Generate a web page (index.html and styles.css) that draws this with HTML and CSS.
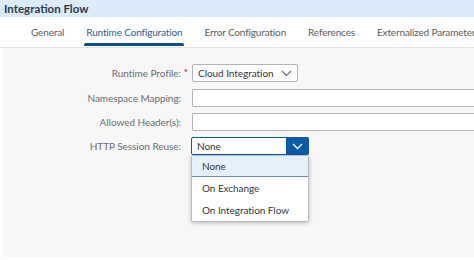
FILE: index.html
```html
<!DOCTYPE html>
<html>
<head>
<meta charset="utf-8">
<link rel="stylesheet" href="styles.css">
</head>
<body>
<div class="page">
  <header class="titlebar">Integration Flow</header>
  <nav class="tabs">
    <span class="tab">General</span>
    <span class="tab active">Runtime Configuration</span>
    <span class="tab">Error Configuration</span>
    <span class="tab">References</span>
    <span class="tab">Externalized Parameters</span>
  </nav>
  <main class="content">
    <div class="form">
      <div class="row first">
        <label class="label">Runtime Profile:<span class="req">*</span></label>
        <div class="select small">
          <span class="value">Cloud Integration</span>
          <svg class="chev" width="11" height="7" viewBox="0 0 11 7"><path d="M1 1l4.5 4.5L10 1" fill="none" stroke="#6a6d70" stroke-width="1.1"/></svg>
        </div>
      </div>
      <div class="row">
        <label class="label">Namespace Mapping:</label>
        <div class="input"></div>
      </div>
      <div class="row">
        <label class="label">Allowed Header(s):</label>
        <div class="input"></div>
      </div>
      <div class="row">
        <label class="label">HTTP Session Reuse:</label>
        <div class="combo-wrap">
          <div class="select open">
            <span class="value">None</span>
            <span class="btn"><svg width="11" height="7" viewBox="0 0 11 7"><path d="M1 1l4.5 4.5L10 1" fill="none" stroke="#fff" stroke-width="1.3"/></svg></span>
          </div>
          <ul class="menu">
            <li class="item sel">None</li>
            <li class="item">On Exchange</li>
            <li class="item">On Integration Flow</li>
          </ul>
        </div>
      </div>
    </div>
  </main>
</div>
</body>
</html>
```
FILE: styles.css
```css
* { box-sizing: border-box; }
html, body { margin: 0; padding: 0; background: #fff; }
body { font-family: Lato, "Liberation Sans", sans-serif; font-size: 10px; letter-spacing: -0.05px; color: #32363a; width: 474px; height: 260px; overflow: hidden; }
.page { display: flex; flex-direction: column; height: 257px; }
.titlebar { height: 17px; background: #dcebfa; font-weight: 700; font-size: 11.5px; line-height: 17px; padding-left: 4px; color: #2d3a47; letter-spacing: 0; }
.tabs { height: 31px; background: #fff; display: flex; gap: 22px; padding-left: 31px; border-bottom: 1px solid #e2e2e2; white-space: nowrap; overflow: hidden; letter-spacing: -0.15px; }
.tab { line-height: 31px; color: #595c5f; position: relative; flex-shrink: 0; }
.tab.active { color: #2c5c93; }
.tab.active::after { content: ""; position: absolute; left: -2px; right: -2px; bottom: 1px; height: 3px; background: #0b4f8e; border-radius: 2px 2px 0 0; }
.content { flex: 1; background: #f7f7f7; margin-left: 3px; padding-top: 16px; }
.form { display: flex; flex-direction: column; gap: 6px; }
.row { display: flex; align-items: flex-start; height: 18px; }
.row.first { margin-bottom: 1px; }
.label { width: 189px; text-align: right; color: #6a6d70; line-height: 18px; padding-right: 11px; position: relative; white-space: nowrap; }
.req { color: #bb0000; position: absolute; right: 4px; top: -1px; }
.select { display: flex; align-items: center; height: 18px; background: #fff; border: 1px solid #aeb3b7; border-radius: 2px; padding-left: 5px; white-space: nowrap; }
.select.small { width: 106px; justify-content: space-between; padding-right: 5px; }
.value { color: #32363a; }
.input { flex: 1; height: 18px; background: #fff; border: 1px solid #aeb3b7; border-right: none; border-radius: 2px 0 0 2px; }
.combo-wrap { position: relative; width: 118px; margin-left: -1px; }
.select.open { width: 118px; border-color: #0b5ba8; justify-content: space-between; padding-right: 0; }
.btn { width: 23px; height: 18px; margin-top: -1px; margin-bottom: -1px; margin-right: -1px; background: #0a5aa8; display: flex; align-items: center; justify-content: center; border-radius: 0 2px 2px 0; }
.menu { position: absolute; top: 18px; left: 0; width: 118px; margin: 0; padding: 0; list-style: none; background: #fff; border: 1px solid #b9bdc1; border-radius: 2px; box-shadow: 0 1px 4px rgba(0,0,0,0.25); }
.item { height: 22px; line-height: 22px; padding-left: 10px; color: #32363a; white-space: nowrap; }
.item.sel { background: #e5f0fa; border-bottom: 1px solid #6a8fbd; height: 21px; line-height: 20px; }
```
